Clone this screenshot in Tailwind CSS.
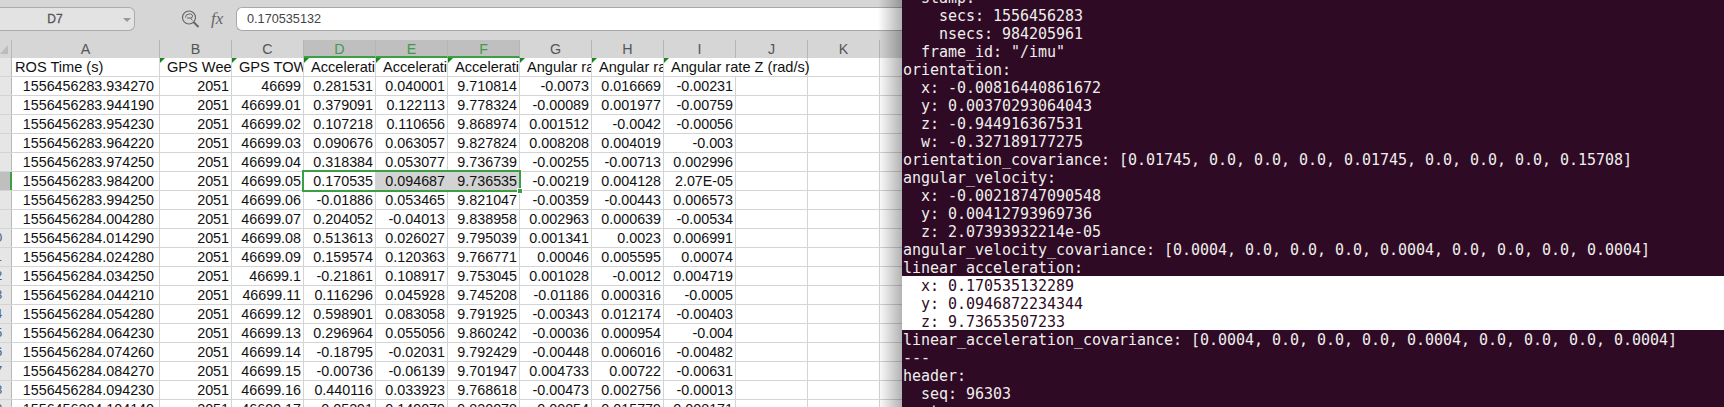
<!DOCTYPE html>
<html lang="en">
<head>
    <meta charset="UTF-8">
    <title>Spreadsheet and terminal</title>
    <script src="https://cdn.jsdelivr.net/npm/@tailwindcss/browser@4"></script>
</head>
<body class="bg-white overflow-hidden">
<div class="flex w-[1724px] h-[407px] overflow-hidden">

    <!-- spreadsheet window -->
    <div class="relative w-[902px] shrink-0 overflow-hidden font-['Liberation_Sans',sans-serif]">
        <!-- formula bar -->
        <div class="h-[40px] bg-[#d6d6d6] flex items-start pt-[7px]">
            <div class="w-[135px] h-[24px] shrink-0 bg-[#e3e3e3] border border-l-0 border-[#ababab] rounded-r-[6px] flex items-center relative">
                <span class="w-full pr-[24px] text-center text-[12px] text-[#555] [-webkit-text-stroke:0.3px_#555]">D7</span>
                <div class="absolute right-[3px] top-[10px] w-0 h-0 border-x-[4px] border-x-transparent border-t-[4px] border-t-[#999]"></div>
            </div>
            <svg class="ml-[46px] mt-[3px] shrink-0" width="19" height="19" viewBox="0 0 19 19" fill="none" stroke="#666">
                <circle cx="8" cy="7.5" r="6.5" stroke-width="1.2"/>
                <path d="M4.5 7.5a3.5 3.5 0 0 1 3.5-3.5M8 4h1.5a2 2 0 0 1 0 4H6m3.5 0l2 2.5" stroke-width="1"/>
                <path d="M12.5 12l5 5" stroke-width="2"/>
            </svg>
            <span class="ml-[11px] mt-[1px] w-[18px] shrink-0 font-['Liberation_Serif',serif] italic text-[17px] leading-[22px] text-[#666]">fx</span>
            <div class="ml-[7px] flex-1 h-[24px] bg-white border border-r-0 border-[#a8a8a8] rounded-l-[6px] pl-[10px] text-[12.7px] leading-[23px] text-[#444]">0.170535132</div>
        </div>

        <div id="sheet"></div>

        <!-- selection D7:F7 -->
        <div class="absolute left-[302px] top-[170px] w-[219px] h-[22px] border-2 border-[#3c9e45]"></div>
        <div class="absolute left-[517px] top-[188px] w-[6px] h-[6px] bg-[#3c9e45] border border-white"></div>

        <!-- shadow of the terminal window -->
        <div class="absolute right-0 top-0 w-[24px] h-full bg-linear-to-r from-black/0 to-black/30"></div>
    </div>

    <!-- terminal -->
    <pre id="term" class="flex-1 bg-[#2f0a24] text-[#eeeeec] font-['DejaVu_Sans_Mono',monospace] text-[15px] leading-[18px] tracking-[-0.03px] -mt-[11px] pl-[1px] h-[418px] overflow-hidden"></pre>
</div>

<script>
    const rows = [
        ['1556456283.934270', '2051', '46699', '0.281531', '0.040001', '9.710814', '-0.0073', '0.016669', '-0.00231'],
        ['1556456283.944190', '2051', '46699.01', '0.379091', '0.122113', '9.778324', '-0.00089', '0.001977', '-0.00759'],
        ['1556456283.954230', '2051', '46699.02', '0.107218', '0.110656', '9.868974', '0.001512', '-0.0042', '-0.00056'],
        ['1556456283.964220', '2051', '46699.03', '0.090676', '0.063057', '9.827824', '0.008208', '0.004019', '-0.003'],
        ['1556456283.974250', '2051', '46699.04', '0.318384', '0.053077', '9.736739', '-0.00255', '-0.00713', '0.002996'],
        ['1556456283.984200', '2051', '46699.05', '0.170535', '0.094687', '9.736535', '-0.00219', '0.004128', '2.07E-05'],
        ['1556456283.994250', '2051', '46699.06', '-0.01886', '0.053465', '9.821047', '-0.00359', '-0.00443', '0.006573'],
        ['1556456284.004280', '2051', '46699.07', '0.204052', '-0.04013', '9.838958', '0.002963', '0.000639', '-0.00534'],
        ['1556456284.014290', '2051', '46699.08', '0.513613', '0.026027', '9.795039', '0.001341', '0.0023', '0.006991'],
        ['1556456284.024280', '2051', '46699.09', '0.159574', '0.120363', '9.766771', '0.00046', '0.005595', '0.00074'],
        ['1556456284.034250', '2051', '46699.1', '-0.21861', '0.108917', '9.753045', '0.001028', '-0.0012', '0.004719'],
        ['1556456284.044210', '2051', '46699.11', '0.116296', '0.045928', '9.745208', '-0.01186', '0.000316', '-0.0005'],
        ['1556456284.054280', '2051', '46699.12', '0.598901', '0.083058', '9.791925', '-0.00343', '0.012174', '-0.00403'],
        ['1556456284.064230', '2051', '46699.13', '0.296964', '0.055056', '9.860242', '-0.00036', '0.000954', '-0.004'],
        ['1556456284.074260', '2051', '46699.14', '-0.18795', '-0.02031', '9.792429', '-0.00448', '0.006016', '-0.00482'],
        ['1556456284.084270', '2051', '46699.15', '-0.00736', '-0.06139', '9.701947', '0.004733', '0.00722', '-0.00631'],
        ['1556456284.094230', '2051', '46699.16', '0.440116', '0.033923', '9.768618', '-0.00473', '0.002756', '-0.00013'],
        ['1556456284.104140', '2051', '46699.17', '-0.05291', '0.149079', '9.820078', '-0.00854', '0.015779', '0.008171']
    ];
    const titles = ['ROS Time (s)', 'GPS Week', 'GPS TOW', 'Acceleration X', 'Acceleration Y', 'Acceleration Z', 'Angular rate X', 'Angular rate Y', 'Angular rate Z (rad/s)', '', ''];
    const letters = ['A', 'B', 'C', 'D', 'E', 'F', 'G', 'H', 'I', 'J', 'K'];

    function colWidth(i) {
        return i === 0 ? 'w-[148px]' : 'w-[72px]';
    }

    let html = '';

    // column letters
    html += '<div class="flex h-[18px] bg-[#d6d6d6]">';
    html += '<div class="relative w-[12px] shrink-0 border-r border-[#b9b9b9]"><div class="absolute left-0 top-[5px] w-[8px] h-[9px] bg-[#bcbcbc] [clip-path:polygon(100%_0,100%_100%,0_100%)]"></div></div>';
    letters.forEach((l, i) => {
        const sel = i >= 3 && i <= 5;
        html += `<div class="${colWidth(i)} shrink-0 text-center text-[14.3px] leading-[18px] border-r border-[#b5b5b5] ${sel ? 'bg-[#bfbfbf] text-[#43994b] border-b-2 border-b-[#3c9e45]' : 'text-[#555]'}">${l}</div>`;
    });
    html += '<div class="flex-1"></div></div>';

    // row 1, the titles
    html += '<div class="flex h-[19px] border-b border-[#d4d4d4] text-[14.6px] leading-[18px] text-[#111]">';
    html += '<div class="w-[12px] shrink-0 bg-[#e6e6e6] border-r border-[#b9b9b9]"></div>';
    titles.forEach((t, i) => {
        const tick = i >= 1 && i <= 8;
        const spill = i === 8;
        html += `<div class="relative ${colWidth(i)} shrink-0 border-r ${spill ? 'border-r-transparent z-10 whitespace-nowrap' : 'border-[#d4d4d4] overflow-hidden whitespace-nowrap'} ${i === 0 ? 'pl-[3px]' : 'pl-[7px]'}">${t}${tick ? '<div class="absolute left-0 top-0 w-[5px] h-[5px] bg-[#17861f] [clip-path:polygon(0_0,100%_0,0_100%)]"></div>' : ''}</div>`;
    });
    html += '<div class="flex-1"></div></div>';

    // data rows, numbered from 2
    rows.forEach((r, n) => {
        const num = n + 2;
        const active = num === 7;
        html += '<div class="flex h-[19px] border-b border-[#d4d4d4] text-[14.3px] leading-[18px] text-[#111]">';
        html += `<div class="w-[12px] shrink-0 overflow-hidden text-[13px] text-[#4d6072] ${active ? 'bg-[#bfbfbf] border-r-2 border-[#3c9e45]' : 'bg-[#e6e6e6] border-r border-[#b9b9b9]'}"><div class="-ml-[16px] w-[22px] text-center">${num}</div></div>`;
        for (let i = 0; i < 11; i++) {
            const shade = active && (i === 4 || i === 5);
            html += `<div class="${colWidth(i)} shrink-0 border-r border-[#d4d4d4] text-right overflow-hidden whitespace-nowrap ${i === 0 ? 'pr-[5px]' : 'pr-[2px]'} ${shade ? 'bg-[#d3d3d3]' : ''}">${r[i] || ''}</div>`;
        }
        html += '<div class="flex-1"></div></div>';
    });
    document.getElementById('sheet').innerHTML = html;

    const before = `  stamp:
    secs: 1556456283
    nsecs: 984205961
  frame_id: "/imu"
orientation:
  x: -0.00816440861672
  y: 0.00370293064043
  z: -0.944916367531
  w: -0.327189177275
orientation_covariance: [0.01745, 0.0, 0.0, 0.0, 0.01745, 0.0, 0.0, 0.0, 0.15708]
angular_velocity:
  x: -0.00218747090548
  y: 0.00412793969736
  z: 2.07393932214e-05
angular_velocity_covariance: [0.0004, 0.0, 0.0, 0.0, 0.0004, 0.0, 0.0, 0.0, 0.0004]
linear_acceleration:
`;
    const marked = `  x: 0.170535132289
  y: 0.0946872234344
  z: 9.73653507233
`;
    const after = `linear_acceleration_covariance: [0.0004, 0.0, 0.0, 0.0, 0.0004, 0.0, 0.0, 0.0, 0.0004]
---
header:
  seq: 96303
  stamp:`;
    document.getElementById('term').innerHTML = before +
        '<div class="-ml-[1px] -mt-[1px] pt-[1px] mb-[1px] h-[54px] overflow-hidden pl-[1px] bg-white text-[#2f0a24]">' + marked + '</div>' + after;
</script>
</body>
</html>
